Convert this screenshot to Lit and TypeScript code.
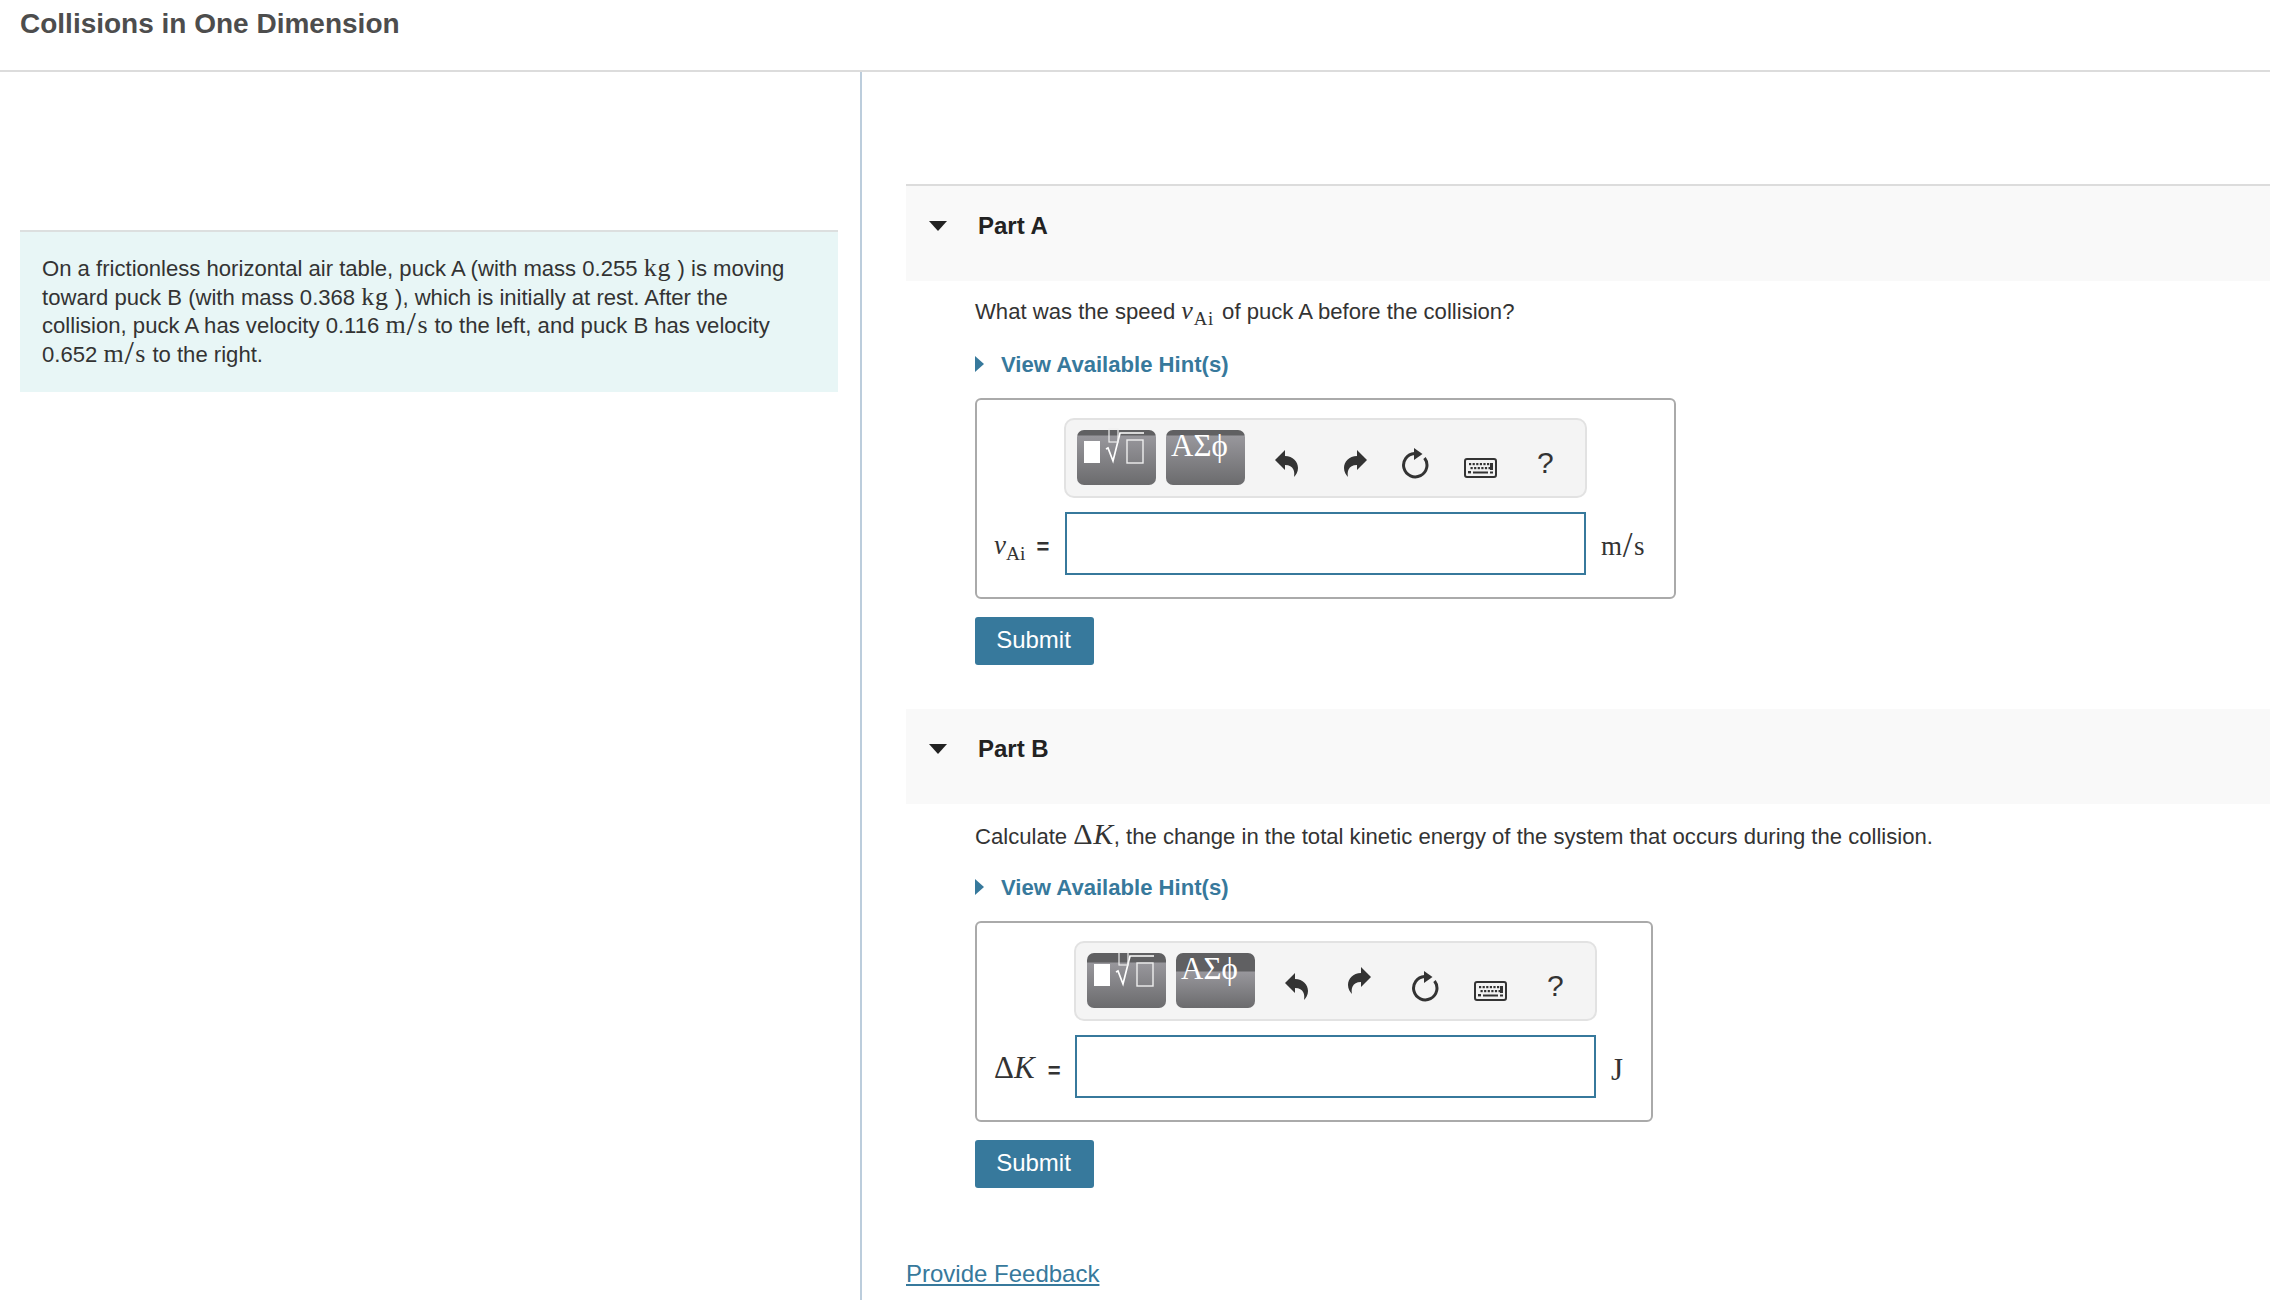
import { LitElement, html, css, svg } from "lit";
import { customElement } from "lit/decorators.js";

const undo = svg`<path d="M0 10 L10 0 V6 C18 6 23 12 23 18 C23 22 21 25 19 27 C20 22 19 15 10 15 V20 Z"/>`;
const keys: [number, number, number][] = [];
for (let i = 0; i < 6; i++) keys.push([5 + i * 3.6, 5, 2.2]);
for (let i = 0; i < 6; i++) keys.push([6.5 + i * 3.6, 9, 2.2]);

interface Part {
  name: string;
  labelW: number;
  boxW: number;
  bandTop: boolean;
  label: unknown;
  unit: unknown;
  question: unknown;
}

const parts: Part[] = [
  {
    name: "Part A",
    labelW: 71,
    boxW: 701,
    bandTop: true,
    label: html`<i class="mi">v</i><sub class="msub">Ai</sub>`,
    unit: html`m<span class="slash">/</span>s`,
    question: html`What was the speed <span class="math sp"><i class="mi">v</i><sub class="msub">Ai</sub></span> of puck A before the collision?`,
  },
  {
    name: "Part B",
    labelW: 81,
    boxW: 678,
    bandTop: false,
    label: html`<span class="dk">Δ<i>K</i></span>`,
    unit: html`<span class="dk">J</span>`,
    question: html`Calculate <span class="math big">Δ<i>K</i></span>, the change in the total kinetic energy of the system that occurs during the collision.`,
  },
];

@customElement("app-root")
export class AppRoot extends LitElement {
  static styles = css`
    :host {
      display: block;
      width: 2270px;
      height: 1300px;
      overflow: hidden;
      background: #fff;
      color: #333;
      font-family: "Liberation Sans", Arial, sans-serif;
      font-size: 22.1px;
    }
    .top {
      height: 70px;
      border-bottom: 2px solid #dcdcdc;
      padding-left: 20px;
    }
    .top h1 {
      margin: 0;
      padding-top: 7px;
      font-size: 28px;
      line-height: 34px;
      font-weight: 700;
      color: #4d4d4d;
    }
    .main {
      display: flex;
      height: 1228px;
    }
    .left {
      width: 860px;
      box-sizing: border-box;
      padding: 158px 22px 0 20px;
      flex: none;
    }
    .divider {
      width: 2px;
      background: #bccddc;
      flex: none;
    }
    .intro {
      background: #e8f6f6;
      border-top: 2px solid #dcdfdf;
      padding: 23px 22px 0;
      line-height: 28.5px;
      height: 162px;
      box-sizing: border-box;
    }
    .math {
      font-family: "Liberation Serif", serif;
      font-size: 26px;
      letter-spacing: 0.8px;
      line-height: 0;
    }
    .math.sp {
      margin-right: 2px;
    }
    .math.big {
      font-size: 30px;
      letter-spacing: 0.6px;
    }
    .slash {
      font-size: 1.3em;
      font-weight: 300;
      letter-spacing: 1.5px;
      line-height: 0;
      vertical-align: -0.07em;
    }
    .mi {
      font-style: italic;
    }
    .msub {
      font-size: 0.72em;
      line-height: 0;
      vertical-align: -0.3em;
    }
    .right {
      flex: 1;
      min-width: 0;
      padding: 112px 0 0 44px;
    }
    .band {
      height: 95px;
      background: #f9f9f9;
      display: flex;
      align-items: flex-start;
      padding: 26px 0 0 23px;
      box-sizing: border-box;
    }
    .band.top-line {
      border-top: 2px solid #dcdcdc;
      height: 97px;
      padding-top: 26px;
    }
    .band .tri {
      width: 0;
      height: 0;
      border-left: 9.5px solid transparent;
      border-right: 9.5px solid transparent;
      border-top: 10px solid #222;
      margin-top: 9px;
    }
    .band h2 {
      margin: 0 0 0 31px;
      font-size: 24px;
      line-height: 28px;
      font-weight: 700;
      color: #222;
    }
    .body {
      padding-left: 69px;
      margin-bottom: 44px;
    }
    .q {
      margin: 0;
      padding-top: 16px;
      line-height: 30px;
      height: 38px;
    }
    .q.low {
      padding-top: 18px;
      height: 36px;
    }
    .hint {
      display: flex;
      align-items: center;
      margin-top: 16px;
      height: 28px;
      font-weight: 700;
      font-size: 22.1px;
      color: #37799c;
    }
    .hint .arrow {
      width: 0;
      height: 0;
      border-top: 8.5px solid transparent;
      border-bottom: 8.5px solid transparent;
      border-left: 9.5px solid #37799c;
      margin: -2px 17px 0 0;
    }
    .box {
      margin-top: 19px;
      border: 2px solid #aaa;
      border-radius: 6px;
      box-sizing: border-box;
      padding: 18px 0 22px 17px;
      height: 201px;
    }
    .tb {
      display: flex;
      width: 523px;
      height: 80px;
      box-sizing: border-box;
      margin-left: -1px;
      background: #f4f4f4;
      border: 2px solid #e2e2e2;
      border-radius: 10px;
      padding: 10px 0 0 11px;
    }
    .btn {
      width: 79px;
      height: 55px;
      border-radius: 7px;
      flex: none;
      background: linear-gradient(#606062 0, #606062 5px, #98979c 6px, #6b6b6d 100%);
      color: #fff;
      position: relative;
    }
    .btn + .btn {
      margin-left: 10px;
      font-family: "Liberation Serif", serif;
      font-size: 31px;
      line-height: 32px;
      padding-left: 5px;
      box-sizing: border-box;
      white-space: nowrap;
    }
    .wide .btn {
      background: linear-gradient(#606062 0, #606062 9px, #98979c 10px, #6b6b6d 100%);
    }
    .wide .btn + .btn {
      background: linear-gradient(#606062 0, #606062 18px, #98979c 19px, #6b6b6d 100%);
    }
    .btn svg {
      position: absolute;
      left: 0;
      top: -2px;
    }
    .ic {
      flex: none;
      fill: #333;
    }
    .undo { margin: 20px 0 0 30px; }
    .redo { margin: 20px 0 0 44px; }
    .wide .redo { margin: 14px 0 0 38px; }
    .refresh { margin: 18px 0 0 35px; }
    .wide .refresh { margin-left: 41px; }
    .kbd { margin: 28px 0 0 34px; }
    .qm {
      flex: none;
      margin: 13px 0 0 40px;
      font-size: 30px;
      line-height: 40px;
      color: #333;
    }
    .row {
      display: flex;
      align-items: center;
      margin-top: 14px;
    }
    .lab {
      flex: none;
      box-sizing: border-box;
      padding-top: 3px;
      font-family: "Liberation Serif", serif;
      font-size: 27px;
      white-space: nowrap;
    }
    .dk {
      font-size: 31px;
      margin-right: 2px;
    }
    .lab .eq {
      font-family: "Liberation Sans", sans-serif;
      font-size: 22px;
      font-weight: 700;
      margin-left: 11px;
    }
    .inp {
      width: 521px;
      height: 63px;
      flex: none;
      box-sizing: border-box;
      border: 2px solid #37799c;
      background: #fff;
    }
    .unit {
      margin-left: 15px;
      padding-top: 6px;
      font-family: "Liberation Serif", serif;
      font-size: 27px;
      letter-spacing: 0.8px;
    }
    .submit {
      display: block;
      margin-top: 18px;
      width: 119px;
      height: 48px;
      border: 0;
      border-radius: 3px;
      padding: 0 2px 2px 0;
      background: #37799c;
      color: #fff;
      font: 24px "Liberation Sans", Arial, sans-serif;
    }
    .fb {
      display: inline-block;
      margin-top: 27px;
      color: #37799c;
      font-size: 24px;
      line-height: 30px;
      text-decoration: underline;
    }
  `;

  private toolbar(wide: boolean) {
    return html`
      <div class="tb ${wide ? "wide" : ""}">
        <div class="btn">
          <svg width="79" height="50" viewBox="0 0 79 50">
            <rect x="7" y="13" width="16" height="22" fill="#fff" />
            <path d="M29 21 L31 20 L36 33 L43 5 H67" fill="none" stroke="#fff" stroke-width="1.7" />
            <rect x="32" y="1" width="9" height="13" fill="none" stroke="#eee" stroke-width="1.2" />
            <rect x="50" y="12" width="16" height="23" fill="none" stroke="#eee" stroke-width="1.4" />
          </svg>
        </div>
        <div class="btn">ΑΣϕ</div>
        <svg class="ic undo" width="24" height="28" viewBox="0 0 24 28">${undo}</svg>
        <svg class="ic redo" width="24" height="28" viewBox="0 0 24 28"><g transform="translate(24 0) scale(-1 1)">${undo}</g></svg>
        <svg class="ic refresh" width="28" height="31" viewBox="0 0 28 31">
          <path d="M12.5 5.5 A11.7 11.7 0 1 0 22.5 10" fill="none" stroke="#333" stroke-width="3" />
          <path d="M12 0 L20.5 6 L12 12 Z" />
        </svg>
        <svg class="ic kbd" width="33" height="20" viewBox="0 0 33 20">
          <rect x="1" y="1" width="31" height="18" rx="2" fill="#f2f2f2" stroke="#333" stroke-width="2" />
          ${keys.map(([x, y, s]) => svg`<rect x=${x} y=${y} width=${s} height=${s} />`)}
          <path d="M26 5 h3 v7 h-3z" />
          <rect x="4" y="13" width="3" height="2.4" />
          <rect x="9" y="13.5" width="15" height="2" />
          <rect x="26" y="13.5" width="3" height="2" />
        </svg>
        <div class="qm">?</div>
      </div>
    `;
  }

  render() {
    return html`
      <div class="top"><h1>Collisions in One Dimension</h1></div>
      <div class="main">
        <div class="left">
          <div class="intro">
            On a frictionless horizontal air table, puck A (with mass 0.255 <span class="math">kg</span> ) is moving<br />
            toward puck B (with mass 0.368 <span class="math">kg</span> ), which is initially at rest. After the<br />
            collision, puck A has velocity 0.116 <span class="math">m<span class="slash">/</span>s</span> to the left, and puck B has velocity<br />
            0.652 <span class="math">m<span class="slash">/</span>s</span> to the right.
          </div>
        </div>
        <div class="divider"></div>
        <div class="right">
          ${parts.map(
            (p) => html`
              <div class="band ${p.bandTop ? "top-line" : ""}">
                <div class="tri"></div>
                <h2>${p.name}</h2>
              </div>
              <div class="body">
                <p class="q ${p.bandTop ? "" : "low"}">${p.question}</p>
                <div class="hint"><span class="arrow"></span>View Available Hint(s)</div>
                <div class="box" style="width:${p.boxW}px">
                  <div style="margin-left:${p.labelW}px">${this.toolbar(!p.bandTop)}</div>
                  <div class="row">
                    <div class="lab" style="width:${p.labelW}px">${p.label}<span class="eq">=</span></div>
                    <div class="inp"></div>
                    <div class="unit">${p.unit}</div>
                  </div>
                </div>
                <button class="submit">Submit</button>
              </div>
            `
          )}
          <div><a class="fb">Provide Feedback</a></div>
        </div>
      </div>
    `;
  }
}
